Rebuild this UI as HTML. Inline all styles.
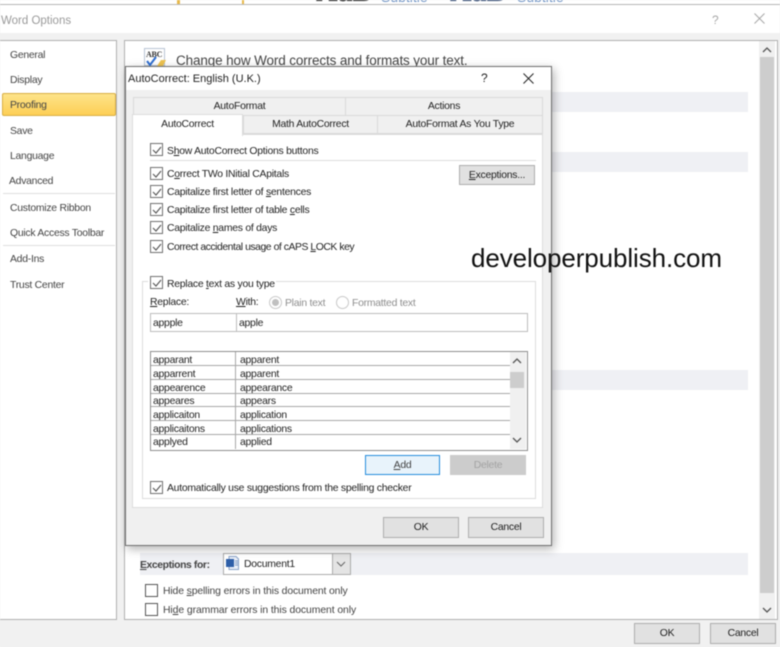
<!DOCTYPE html>
<html><head><meta charset="utf-8"><style>
html,body{margin:0;padding:0;background:#f1f1f1}
#p{position:relative;width:780px;height:647px;overflow:hidden;background:#f1f1f1;font-family:"Liberation Sans",sans-serif;font-size:10.4px;letter-spacing:-.25px;color:#333;filter:blur(.4px)}
#p div,#p svg{position:absolute}
.t{white-space:nowrap;line-height:14px;margin-top:2px}
.s{color:#444;left:10px}
.c{width:11px;height:11px;border:1px solid #707070;background:#fff;left:150px}
.b{background:#e1e1e1;border:1px solid #adadad;text-align:center;box-sizing:border-box;line-height:20px;color:#222}
.band{left:140px;width:608px;height:20px;background:#eff0f4}
.tab{background:#f0f0f0;border:1px solid #d9d9d9;box-sizing:border-box;text-align:center;line-height:18px;color:#222}
.r{left:151px;width:359px;height:1px;background:#a8a8a8}
.d{color:#222}
</style></head><body><div id="p">
<div style="left:0;top:0;width:780px;height:5px;background:#fff;border-bottom:1px solid #b5b5b5;box-sizing:border-box"></div>
<div style="left:177px;top:0;width:3px;height:4px;background:#e8b94a"></div>
<div style="left:242px;top:0;width:2px;height:4px;background:#e8b94a"></div>
<div style="left:0;top:0;width:780px;height:4px;overflow:hidden">
<div class="t" style="margin:0;left:316px;top:-20px;font:bold 30px/24px 'Liberation Serif',serif;color:#111;letter-spacing:0">AaB</div>
<div class="t" style="margin:0;left:381px;top:-10px;color:#6f93c4;font-size:14px;letter-spacing:0">Subtitle</div>
<div class="t" style="margin:0;left:450px;top:-20px;font:bold 30px/24px 'Liberation Serif',serif;color:#1f3864;letter-spacing:0">AaB</div>
<div class="t" style="margin:0;left:517px;top:-10px;color:#6f93c4;font-size:14px;letter-spacing:0">Subtitle</div>
</div>
<div style="left:0;top:5px;width:780px;height:28px;background:#fff"></div>
<div class="t" style="left:1px;top:12px;font-size:11.5px;letter-spacing:0;color:#9a9a9a">Word Options</div>
<div class="t" style="left:712px;top:11px;font-size:12px;color:#a8a8a8">?</div>
<svg style="left:754px;top:13px" width="11" height="11"><path d="M.5.5l10 10M10.500.5l-10 10" stroke="#a8a8a8" fill="none"/></svg>

<!-- left nav -->
<div style="left:-1px;top:40px;width:117px;height:578px;background:#fff;border:1px solid #b0b0b0;border-left:0"></div>
<div class="t s" style="top:47px">General</div>
<div class="t s" style="top:72px">Display</div>
<div style="left:2px;top:93px;width:112px;height:21px;background:linear-gradient(#fde48a,#fdcf55);border:1px solid #d9ae42;border-radius:2px"></div>
<div class="t s" style="top:97px">Proofing</div>
<div class="t s" style="top:123px">Save</div>
<div class="t s" style="top:148px">Language</div>
<div class="t s" style="top:173px;left:9px">Advanced</div>
<div style="left:3px;top:193px;width:112px;height:1px;background:#dedede"></div>
<div class="t s" style="top:200px">Customize Ribbon</div>
<div class="t s" style="top:225px">Quick Access Toolbar</div>
<div style="left:3px;top:245px;width:112px;height:1px;background:#dedede"></div>
<div class="t s" style="top:251px">Add-Ins</div>
<div class="t s" style="top:277px">Trust Center</div>

<!-- main panel -->
<div style="left:124px;top:40px;width:652px;height:578px;background:#fff;border:1px solid #b0b0b0;box-sizing:content-box"></div>
<div style="left:759px;top:41px;width:16px;height:578px;background:#f0f0f0"></div>
<div style="left:760px;top:57px;width:14px;height:536px;background:#cdcdcd"></div>
<svg style="left:762px;top:47px" width="10" height="6"><path d="M1 5l4-4 4 4" stroke="#555" stroke-width="1.300" fill="none"/></svg>
<svg style="left:762px;top:607px" width="10" height="6"><path d="M1 1l4 4 4-4" stroke="#555" stroke-width="1.300" fill="none"/></svg>
<svg style="left:144px;top:48px" width="24" height="20"><rect x=".5" y=".5" width="20" height="17" fill="#fff" stroke="#b8c4d4"/><text x="2" y="9" font-family="Liberation Serif" font-size="8" font-weight="bold" fill="#333">ABC</text><path d="M3 13l3 4 6-8" stroke="#2f6fd0" stroke-width="2" fill="none"/><path d="M13 18l4-6h5l-3 6z" fill="#eec350"/></svg>
<div class="t" style="margin:0;left:176px;top:54px;font-size:13.5px;letter-spacing:-.13px;color:#444">Change how Word corrects and formats your text.</div>
<div class="band" style="top:92px"></div>
<div class="band" style="top:152px"></div>
<div class="band" style="top:370px"></div>
<div class="band" style="top:553px;height:22px"></div>
<div class="t" style="left:140px;top:557px;font-weight:bold;color:#444;letter-spacing:-.4px"><u>E</u>xceptions for:</div>
<div style="left:223px;top:553px;width:109px;height:20px;background:#fff;border:1px solid #ababab"></div>
<div style="left:332px;top:553px;width:17px;height:20px;background:#e4e4e4;border:1px solid #ababab"></div>
<svg style="left:336px;top:561px" width="10" height="6"><path d="M1 1l4 4 4-4" stroke="#666" fill="none"/></svg>
<svg style="left:226px;top:556px" width="13" height="14"><path d="M3 .5h7l2.500 2.500v10.500h-9.500z" fill="#e9eef7" stroke="#8aa3c8"/><rect x="0" y="3" width="8" height="8" fill="#2d5ea8"/><path d="M9 5h3M9 7h3M9 9h3" stroke="#7d9ac6"/></svg>
<div class="t d" style="left:244px;top:556px">Document1</div>
<div style="left:145px;top:584px;width:11px;height:11px;border:1px solid #555;background:#fff"></div>
<div class="t" style="left:163px;top:583px;color:#444;letter-spacing:-.13px">Hide <u>s</u>pelling errors in this document only</div>
<div style="left:145px;top:603px;width:11px;height:11px;border:1px solid #555;background:#fff"></div>
<div class="t" style="left:163px;top:602px;color:#444;letter-spacing:-.08px">Hi<u>d</u>e grammar errors in this document only</div>
<div class="b" style="left:634px;top:623px;width:66px;height:21px">OK</div>
<div class="b" style="left:710px;top:623px;width:66px;height:21px">Cancel</div>

<!-- dialog -->
<div style="left:125px;top:66px;width:425px;height:478px;background:#f0f0f0;border:1px solid #6f6f6f;box-shadow:2px 3px 9px rgba(0,0,0,.3)"></div>
<div style="left:126px;top:67px;width:425px;height:23px;background:#fff"></div>
<div class="t d" style="left:128px;top:70px;font-size:11px;letter-spacing:0">AutoCorrect: English (U.K.)</div>
<div class="t d" style="left:481px;top:69px;font-size:12px">?</div>
<svg style="left:523px;top:73px" width="11" height="11"><path d="M.5.5l10 10M10.500.5l-10 10" stroke="#222" fill="none"/></svg>

<div class="tab" style="left:133px;top:97px;width:213px;height:19px">AutoFormat</div>
<div class="tab" style="left:345px;top:97px;width:198px;height:19px">Actions</div>
<div class="tab" style="left:243px;top:115px;width:135px;height:19px">Math AutoCorrect</div>
<div class="tab" style="left:377px;top:115px;width:166px;height:19px">AutoFormat As You Type</div>
<div style="left:132px;top:134px;width:411px;height:374px;background:#fff;border:1px solid #dcdcdc;box-sizing:border-box"></div>
<div style="left:132px;top:114px;width:111px;height:22px;background:#fff;border:1px solid #dcdcdc;border-bottom:0;box-sizing:border-box;text-align:center;line-height:20px;color:#222">AutoCorrect</div>

<div class="c" style="top:143px"></div><div class="t d" style="left:167px;top:143px">S<u>h</u>ow AutoCorrect Options buttons</div>
<div style="left:150px;top:160px;width:386px;height:1px;background:#dcdcdc"></div>
<div class="c" style="top:167px"></div><div class="t d" style="left:167px;top:166px">C<u>o</u>rrect TWo INitial CApitals</div>
<div class="c" style="top:185px"></div><div class="t d" style="left:167px;top:184px">Capitalize first letter of <u>s</u>entences</div>
<div class="c" style="top:203px"></div><div class="t d" style="left:167px;top:202px">Capitalize first letter of table <u>c</u>ells</div>
<div class="c" style="top:221px"></div><div class="t d" style="left:167px;top:220px">Capitalize <u>n</u>ames of days</div>
<div class="c" style="top:240px"></div><div class="t d" style="left:167px;top:239px;letter-spacing:-.45px">Correct accidental usage of cAPS <u>L</u>OCK key</div>
<div style="left:459px;top:165px;width:76px;height:20px;background:#e1e1e1;border:1px solid #adadad;box-sizing:border-box;text-align:center;line-height:19px;color:#222"><u>E</u>xceptions...</div>

<div style="left:142px;top:281px;width:392px;height:216px;border:1px solid #dcdcdc"></div>
<div style="left:148px;top:276px;width:128px;height:14px;background:#fff"></div>
<div class="c" style="top:276px"></div><div class="t d" style="left:167px;top:276px">Replace <u>t</u>ext as you type</div>
<div class="t d" style="left:150px;top:294px"><u>R</u>eplace:</div>
<div class="t d" style="left:236px;top:294px"><u>W</u>ith:</div>
<div style="left:269px;top:296px;width:11px;height:11px;border:1px solid #c8c8c8;border-radius:50%;background:#fff"></div>
<div style="left:272px;top:299px;width:7px;height:7px;border-radius:50%;background:#c0c0c0"></div>
<div class="t" style="left:285px;top:295px;color:#8e8e8e">Plain text</div>
<div style="left:336px;top:296px;width:11px;height:11px;border:1px solid #c8c8c8;border-radius:50%;background:#fff"></div>
<div class="t" style="left:352px;top:295px;color:#8e8e8e">Formatted text</div>
<div style="left:150px;top:313px;width:376px;height:17px;background:#fff;border:1px solid #bdbdbd"></div>
<div style="left:236px;top:313px;width:1px;height:18px;background:#bdbdbd"></div>
<div class="t d" style="left:153px;top:315px">appple</div>
<div class="t d" style="left:239px;top:315px">apple</div>

<div style="left:150px;top:351px;width:376px;height:98px;background:#fff;border:1px solid #8e8e8e"></div>
<div style="left:235px;top:352px;width:1px;height:97px;background:#a8a8a8"></div>
<div class="r" style="top:365px"></div><div class="r" style="top:379px"></div><div class="r" style="top:393px"></div><div class="r" style="top:406px"></div><div class="r" style="top:420px"></div><div class="r" style="top:434px"></div>
<div class="t d" style="left:153px;top:352px">apparant</div><div class="t d" style="left:240px;top:352px">apparent</div>
<div class="t d" style="left:153px;top:366px">apparrent</div><div class="t d" style="left:240px;top:366px">apparent</div>
<div class="t d" style="left:153px;top:380px">appearence</div><div class="t d" style="left:240px;top:380px">appearance</div>
<div class="t d" style="left:153px;top:393px">appeares</div><div class="t d" style="left:240px;top:393px">appears</div>
<div class="t d" style="left:153px;top:407px">applicaiton</div><div class="t d" style="left:240px;top:407px">application</div>
<div class="t d" style="left:153px;top:421px">applicaitons</div><div class="t d" style="left:240px;top:421px">applications</div>
<div class="t d" style="left:153px;top:434px">applyed</div><div class="t d" style="left:240px;top:434px">applied</div>
<div style="left:510px;top:352px;width:16px;height:97px;background:#f0f0f0"></div>
<div style="left:510px;top:372px;width:14px;height:16px;background:#cdcdcd"></div>
<svg style="left:512px;top:358px" width="10" height="6"><path d="M1 5l4-4 4 4" stroke="#555" stroke-width="1.300" fill="none"/></svg>
<svg style="left:512px;top:437px" width="10" height="6"><path d="M1 1l4 4 4-4" stroke="#555" stroke-width="1.300" fill="none"/></svg>

<div style="left:365px;top:455px;width:75px;height:20px;background:#e5f1fb;border:1px solid #0078d7;box-sizing:border-box;text-align:center;line-height:20px;color:#222;opacity:.85"><u>A</u>dd</div>
<div style="left:450px;top:455px;width:76px;height:20px;background:#cccccc;box-sizing:border-box;text-align:center;line-height:21px;color:#a3a3a3">Delete</div>
<div class="c" style="top:481px"></div><div class="t d" style="left:167px;top:480px">Automatically use suggestions from the spelling checker</div>
<div class="b" style="left:383px;top:517px;width:76px;height:21px">OK</div>
<div class="b" style="left:468px;top:517px;width:76px;height:21px">Cancel</div>

<svg style="left:150px;top:0" width="14" height="500"><g stroke="#555" fill="none" stroke-width="1.100"><path d="M3 150l3 3 5-6M3 174l3 3 5-6M3 192l3 3 5-6M3 210l3 3 5-6M3 228l3 3 5-6M3 247l3 3 5-6M3 283l3 3 5-6M3 488l3 3 5-6"/></g></svg>

<div class="t" style="margin:0;left:471px;top:243px;font-size:26px;line-height:30px;letter-spacing:-.1px;color:#111">developerpublish.com</div>
</div></body></html>
